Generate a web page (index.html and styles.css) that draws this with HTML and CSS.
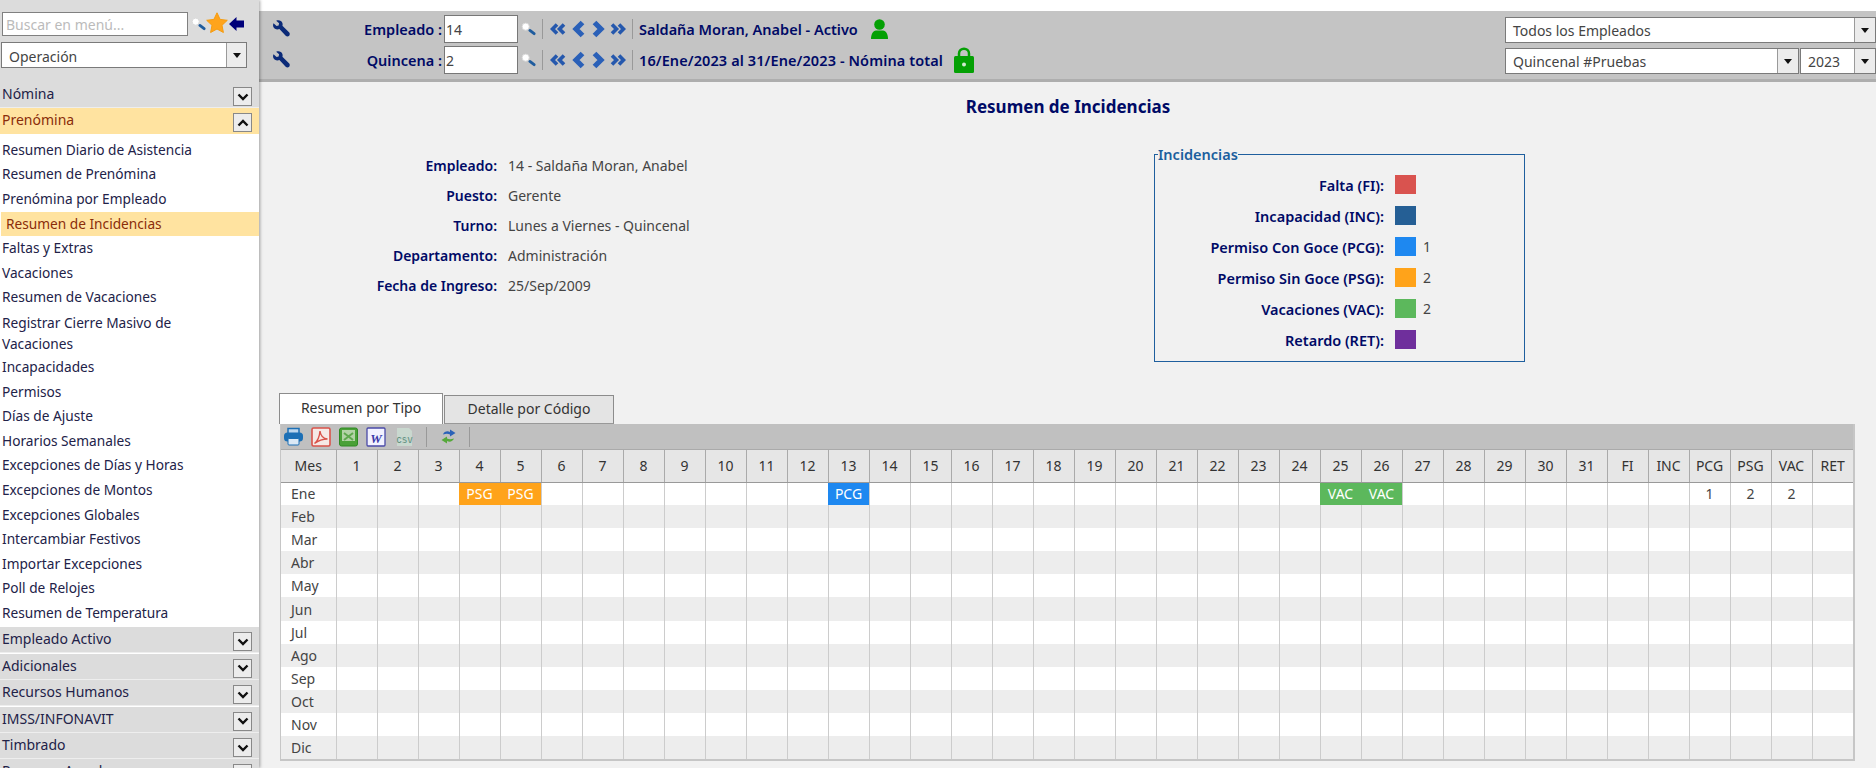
FILE: index.html
```html
<!DOCTYPE html>
<html lang="es">
<head>
<meta charset="utf-8">
<title>Resumen de Incidencias</title>
<link rel="stylesheet" href="styles.css">
</head>
<body>
<svg class="defs" width="0" height="0" aria-hidden="true">
  <symbol id="i-wrench" viewBox="0 0 18 18"><path d="M1.500 3.200 4.600 6 6.600 5.400 7.100 3.300 4.200.8C6.600-.3 9.600.6 10.400 3c.3 1 .3 1.900 0 2.700L17 12.300c1 1 1 2.300.2 3.400-1 1-2.500 1-3.500 0L7.400 9C5 10 2.300 9 1.300 6.700.9 5.600 1 4.300 1.500 3.200Z" fill="#0b2a78"/></symbol>
  <symbol id="i-mag" viewBox="0 0 16 14"><circle cx="5" cy="4.500" r="3.800" fill="#fff" stroke="#d8d8d8"/><path d="M9.500 8.500l4.500 3.500" stroke="#1f5c9e" stroke-width="3" stroke-linecap="round"/></symbol>
  <symbol id="i-dbl-l" viewBox="0 0 16 14"><path d="M7 2.500 2.500 7 7 11.500M14 2.500 9.500 7l4.500 4.500" fill="none" stroke="#2558ad" stroke-width="3.600"/></symbol>
  <symbol id="i-dbl-r" viewBox="0 0 16 14"><path d="M2 2.500 6.500 7 2 11.500M9 2.500 13.500 7 9 11.500" fill="none" stroke="#2558ad" stroke-width="3.600"/></symbol>
  <symbol id="i-l" viewBox="0 0 14 18"><path d="M10.500 2.500 4 9l6.500 6.500" fill="none" stroke="#2a60b8" stroke-width="5.200"/></symbol>
  <symbol id="i-r" viewBox="0 0 14 18"><path d="M3.500 2.500 10 9l-6.500 6.500" fill="none" stroke="#2a60b8" stroke-width="5.200"/></symbol>
  <symbol id="i-down" viewBox="0 0 12 8"><path d="M1.500 1.500 6 6l4.500-4.500" fill="none" stroke="#111" stroke-width="2.400"/></symbol>
  <symbol id="i-up" viewBox="0 0 12 8"><path d="M1.500 6.500 6 2l4.500 4.500" fill="none" stroke="#111" stroke-width="2.400"/></symbol>
</svg>

<aside class="sidebar">
  <div class="side-top">
    <div class="search-row">
      <input class="search" type="text" placeholder="Buscar en menú...">
      <svg class="mag" width="15" height="14"><use href="#i-mag"/></svg>
      <svg class="star" width="22" height="22" viewBox="0 0 22 22"><path d="M11 .8l3.100 6.600 7.200.9-5.300 5 1.400 7.200L11 17l-6.400 3.500L6 13.300.7 8.300l7.200-.9Z" fill="#ffa41c" stroke="#f59c10" stroke-linejoin="round"/></svg>
      <svg class="back" width="15" height="14" viewBox="0 0 15 14"><path d="M0 7 7.500 0v3.500H15v7H7.500V14Z" fill="#00007a"/></svg>
    </div>
    <div class="combo combo-side">
      <span class="combo-text">Operación</span><span class="combo-btn"><i class="caret"></i></span>
    </div>
  </div>
  <div class="head"><span>Nómina</span><span class="tog"><svg width="12" height="8"><use href="#i-down"/></svg></span></div>
  <div class="head open"><span>Prenómina</span><span class="tog"><svg width="12" height="8"><use href="#i-up"/></svg></span></div>
  <ul class="menu">
    <li>Resumen Diario de Asistencia</li>
    <li>Resumen de Prenómina</li>
    <li>Prenómina por Empleado</li>
    <li class="sel">Resumen de Incidencias</li>
    <li>Faltas y Extras</li>
    <li>Vacaciones</li>
    <li>Resumen de Vacaciones</li>
    <li>Registrar Cierre Masivo de Vacaciones</li>
    <li>Incapacidades</li>
    <li>Permisos</li>
    <li>Días de Ajuste</li>
    <li>Horarios Semanales</li>
    <li>Excepciones de Días y Horas</li>
    <li>Excepciones de Montos</li>
    <li>Excepciones Globales</li>
    <li>Intercambiar Festivos</li>
    <li>Importar Excepciones</li>
    <li>Poll de Relojes</li>
    <li>Resumen de Temperatura</li>
  </ul>
  <div class="head"><span>Empleado Activo</span><span class="tog"><svg width="12" height="8"><use href="#i-down"/></svg></span></div>
  <div class="head"><span>Adicionales</span><span class="tog"><svg width="12" height="8"><use href="#i-down"/></svg></span></div>
  <div class="head"><span>Recursos Humanos</span><span class="tog"><svg width="12" height="8"><use href="#i-down"/></svg></span></div>
  <div class="head"><span>IMSS/INFONAVIT</span><span class="tog"><svg width="12" height="8"><use href="#i-down"/></svg></span></div>
  <div class="head"><span>Timbrado</span><span class="tog"><svg width="12" height="8"><use href="#i-down"/></svg></span></div>
  <div class="head"><span>Procesos Anuales</span><span class="tog"><svg width="12" height="8"><use href="#i-down"/></svg></span></div>
</aside>

<main class="main">
  <header class="bar">
    <div class="bar-left">
      <div class="bar-row">
        <svg class="wrench" width="18" height="18"><use href="#i-wrench"/></svg>
        <label class="bar-label">Empleado :</label>
        <input class="num" type="text" value="14">
        <svg class="mag" width="15" height="14"><use href="#i-mag"/></svg>
        <i class="sep"></i>
        <span class="nav">
          <svg width="16" height="14"><use href="#i-dbl-l"/></svg>
          <svg width="14" height="18"><use href="#i-l"/></svg>
          <svg width="14" height="18"><use href="#i-r"/></svg>
          <svg width="16" height="14"><use href="#i-dbl-r"/></svg>
        </span>
        <i class="sep"></i>
        <strong class="bar-text">Saldaña Moran, Anabel - Activo</strong>
        <svg class="status" width="17" height="20" viewBox="0 0 17 20"><circle cx="8.500" cy="5.500" r="5.300" fill="#04a004"/><path d="M0 20c0-5 2-8 5-8.500h7c3 .5 5 3.500 5 8.500Z" fill="#04a004"/></svg>
      </div>
      <div class="bar-row">
        <svg class="wrench" width="18" height="18"><use href="#i-wrench"/></svg>
        <label class="bar-label">Quincena :</label>
        <input class="num" type="text" value="2">
        <svg class="mag" width="15" height="14"><use href="#i-mag"/></svg>
        <i class="sep"></i>
        <span class="nav">
          <svg width="16" height="14"><use href="#i-dbl-l"/></svg>
          <svg width="14" height="18"><use href="#i-l"/></svg>
          <svg width="14" height="18"><use href="#i-r"/></svg>
          <svg width="16" height="14"><use href="#i-dbl-r"/></svg>
        </span>
        <i class="sep"></i>
        <strong class="bar-text wide">16/Ene/2023 al 31/Ene/2023 - Nómina total</strong>
        <svg class="status lock" width="20" height="26" viewBox="0 0 20 26"><path d="M5 11V6.500c0-6.500 10-6.500 10 0V11" fill="none" stroke="#04a004" stroke-width="2.500"/><rect y="9" width="20" height="17" rx="1.500" fill="#04a004"/><circle cx="10" cy="17.500" r="2" fill="#cfe8cf"/></svg>
      </div>
    </div>
    <div class="bar-right">
      <div class="combo combo-full"><span class="combo-text">Todos los Empleados</span><span class="combo-btn"><i class="caret"></i></span></div>
      <div class="combo-pair">
        <div class="combo combo-q"><span class="combo-text">Quincenal #Pruebas</span><span class="combo-btn"><i class="caret"></i></span></div>
        <div class="combo combo-y"><span class="combo-text">2023</span><span class="combo-btn"><i class="caret"></i></span></div>
      </div>
    </div>
  </header>

  <section class="content">
    <h1 class="title">Resumen de Incidencias</h1>
    <div class="summary">
      <dl class="info">
        <dt>Empleado:</dt><dd>14 - Saldaña Moran, Anabel</dd>
        <dt>Puesto:</dt><dd>Gerente</dd>
        <dt>Turno:</dt><dd>Lunes a Viernes - Quincenal</dd>
        <dt>Departamento:</dt><dd>Administración</dd>
        <dt>Fecha de Ingreso:</dt><dd>25/Sep/2009</dd>
      </dl>
      <fieldset class="legendbox">
        <legend>Incidencias</legend>
        <div class="lg-row"><b>Falta (FI):</b><i class="swatch c-fi"></i><span></span></div>
        <div class="lg-row"><b>Incapacidad (INC):</b><i class="swatch c-inc"></i><span></span></div>
        <div class="lg-row"><b>Permiso Con Goce (PCG):</b><i class="swatch c-pcg"></i><span>1</span></div>
        <div class="lg-row"><b>Permiso Sin Goce (PSG):</b><i class="swatch c-psg"></i><span>2</span></div>
        <div class="lg-row"><b>Vacaciones (VAC):</b><i class="swatch c-vac"></i><span>2</span></div>
        <div class="lg-row"><b>Retardo (RET):</b><i class="swatch c-ret"></i><span></span></div>
      </fieldset>
    </div>

    <nav class="tabs">
      <span class="tab active">Resumen por Tipo</span>
      <span class="tab">Detalle por Código</span>
    </nav>
    <div class="grid">
      <div class="grid-tools">
        <svg width="19" height="19" viewBox="0 0 19 19"><path d="M4 7V1.500h11V7" fill="#bcd6ee" stroke="#1c6fb5" stroke-width="1.500"/><rect y="5.500" width="19" height="9" rx="3.500" fill="#1c6fb5"/><rect x="4" y="11.500" width="11" height="6.500" rx="1" fill="#dbe9f5" stroke="#1c6fb5"/></svg>
        <svg width="20" height="20" viewBox="0 0 20 20"><rect x="1" y="1" width="18" height="18" rx="1.500" fill="#f6e9e6" stroke="#d9534a" stroke-width="1.600"/><path d="M3.500 16.500c3-2.500 5-6.500 5.500-12.500.5 4.500 3.500 7.500 7.500 8-4.500 0-9 1.500-13 4.500Z" fill="none" stroke="#d9534a" stroke-width="1.400"/></svg>
        <svg width="19" height="20" viewBox="0 0 19 20"><rect x="0.500" y="1" width="18" height="18" rx="2" fill="#4aa038" stroke="#2e8a22"/><rect x="3" y="3" width="13" height="11" fill="#b3d3a6"/><path d="M5 6l9 7M14 6l-9 7" stroke="#5fa84e" stroke-width="2"/></svg>
        <svg width="20" height="20" viewBox="0 0 20 20"><rect x="1" y="1" width="18" height="18" rx="1" fill="#f2f2ff" stroke="#4a4aa8" stroke-width="1.300"/><text class="ico-w" x="10" y="15.500" text-anchor="middle">W</text></svg>
        <svg width="21" height="20" viewBox="0 0 21 20"><path d="M3 1h12l3 3v15H3Z" fill="#c9d8cf"/><text class="ico-csv" x="10.500" y="15.500" text-anchor="middle">csv</text></svg>
        <i class="tool-sep"></i>
        <svg width="17" height="17" viewBox="0 0 17 17"><path d="M3 6.500C4 3.500 7.500 2.500 10 4V1.500L15.500 5 10 8.500V6.500C8 5.500 6 5.500 3 6.500Z" fill="#2b62b8"/><path d="M14 10.500c-1 3-4.500 4-7 2.500v2.500L1.500 12 7 8.500v2c2 1 4 1 7 0Z" fill="#55a83a"/></svg>
        <i class="tool-sep"></i>
      </div>
      <table class="tbl">
        <thead>
          <tr><th class="mes">Mes</th><th>1</th><th>2</th><th>3</th><th>4</th><th>5</th><th>6</th><th>7</th><th>8</th><th>9</th><th>10</th><th>11</th><th>12</th><th>13</th><th>14</th><th>15</th><th>16</th><th>17</th><th>18</th><th>19</th><th>20</th><th>21</th><th>22</th><th>23</th><th>24</th><th>25</th><th>26</th><th>27</th><th>28</th><th>29</th><th>30</th><th>31</th><th>FI</th><th>INC</th><th>PCG</th><th>PSG</th><th>VAC</th><th>RET</th></tr>
        </thead>
        <tbody>
          <tr><td>Ene</td><td></td><td></td><td></td><td class="c-psg">PSG</td><td class="c-psg">PSG</td><td></td><td></td><td></td><td></td><td></td><td></td><td></td><td class="c-pcg">PCG</td><td></td><td></td><td></td><td></td><td></td><td></td><td></td><td></td><td></td><td></td><td></td><td class="c-vac">VAC</td><td class="c-vac">VAC</td><td></td><td></td><td></td><td></td><td></td><td></td><td></td><td>1</td><td>2</td><td>2</td><td></td></tr>
          <tr><td>Feb</td><td></td><td></td><td></td><td></td><td></td><td></td><td></td><td></td><td></td><td></td><td></td><td></td><td></td><td></td><td></td><td></td><td></td><td></td><td></td><td></td><td></td><td></td><td></td><td></td><td></td><td></td><td></td><td></td><td></td><td></td><td></td><td></td><td></td><td></td><td></td><td></td><td></td></tr>
          <tr><td>Mar</td><td></td><td></td><td></td><td></td><td></td><td></td><td></td><td></td><td></td><td></td><td></td><td></td><td></td><td></td><td></td><td></td><td></td><td></td><td></td><td></td><td></td><td></td><td></td><td></td><td></td><td></td><td></td><td></td><td></td><td></td><td></td><td></td><td></td><td></td><td></td><td></td><td></td></tr>
          <tr><td>Abr</td><td></td><td></td><td></td><td></td><td></td><td></td><td></td><td></td><td></td><td></td><td></td><td></td><td></td><td></td><td></td><td></td><td></td><td></td><td></td><td></td><td></td><td></td><td></td><td></td><td></td><td></td><td></td><td></td><td></td><td></td><td></td><td></td><td></td><td></td><td></td><td></td><td></td></tr>
          <tr><td>May</td><td></td><td></td><td></td><td></td><td></td><td></td><td></td><td></td><td></td><td></td><td></td><td></td><td></td><td></td><td></td><td></td><td></td><td></td><td></td><td></td><td></td><td></td><td></td><td></td><td></td><td></td><td></td><td></td><td></td><td></td><td></td><td></td><td></td><td></td><td></td><td></td><td></td></tr>
          <tr><td>Jun</td><td></td><td></td><td></td><td></td><td></td><td></td><td></td><td></td><td></td><td></td><td></td><td></td><td></td><td></td><td></td><td></td><td></td><td></td><td></td><td></td><td></td><td></td><td></td><td></td><td></td><td></td><td></td><td></td><td></td><td></td><td></td><td></td><td></td><td></td><td></td><td></td><td></td></tr>
          <tr><td>Jul</td><td></td><td></td><td></td><td></td><td></td><td></td><td></td><td></td><td></td><td></td><td></td><td></td><td></td><td></td><td></td><td></td><td></td><td></td><td></td><td></td><td></td><td></td><td></td><td></td><td></td><td></td><td></td><td></td><td></td><td></td><td></td><td></td><td></td><td></td><td></td><td></td><td></td></tr>
          <tr><td>Ago</td><td></td><td></td><td></td><td></td><td></td><td></td><td></td><td></td><td></td><td></td><td></td><td></td><td></td><td></td><td></td><td></td><td></td><td></td><td></td><td></td><td></td><td></td><td></td><td></td><td></td><td></td><td></td><td></td><td></td><td></td><td></td><td></td><td></td><td></td><td></td><td></td><td></td></tr>
          <tr><td>Sep</td><td></td><td></td><td></td><td></td><td></td><td></td><td></td><td></td><td></td><td></td><td></td><td></td><td></td><td></td><td></td><td></td><td></td><td></td><td></td><td></td><td></td><td></td><td></td><td></td><td></td><td></td><td></td><td></td><td></td><td></td><td></td><td></td><td></td><td></td><td></td><td></td><td></td></tr>
          <tr><td>Oct</td><td></td><td></td><td></td><td></td><td></td><td></td><td></td><td></td><td></td><td></td><td></td><td></td><td></td><td></td><td></td><td></td><td></td><td></td><td></td><td></td><td></td><td></td><td></td><td></td><td></td><td></td><td></td><td></td><td></td><td></td><td></td><td></td><td></td><td></td><td></td><td></td><td></td></tr>
          <tr><td>Nov</td><td></td><td></td><td></td><td></td><td></td><td></td><td></td><td></td><td></td><td></td><td></td><td></td><td></td><td></td><td></td><td></td><td></td><td></td><td></td><td></td><td></td><td></td><td></td><td></td><td></td><td></td><td></td><td></td><td></td><td></td><td></td><td></td><td></td><td></td><td></td><td></td><td></td></tr>
          <tr><td>Dic</td><td></td><td></td><td></td><td></td><td></td><td></td><td></td><td></td><td></td><td></td><td></td><td></td><td></td><td></td><td></td><td></td><td></td><td></td><td></td><td></td><td></td><td></td><td></td><td></td><td></td><td></td><td></td><td></td><td></td><td></td><td></td><td></td><td></td><td></td><td></td><td></td><td></td></tr>
        </tbody>
      </table>
    </div>
  </section>
</main>
</body>
</html>
```

FILE: styles.css
```css
* { box-sizing: border-box; }
html, body { height: 100%; }
body {
  margin: 0;
  height: 768px;
  overflow: hidden;
  display: flex;
  background: #f1f1f1;
  font-family: "Noto Sans", "Open Sans", sans-serif;
  font-size: 14px;
  color: #444;
}
.defs { position: absolute; }

/* Sidebar */
.sidebar {
  flex: 0 0 259px;
  width: 259px;
  height: 768px;
  overflow: hidden;
  background: #fff;
  box-shadow: 1px 0 3px rgba(0,0,0,.35);
  position: relative;
  z-index: 2;
}
.side-top { background: #dcdcdc; height: 82px; padding: 12px 0 0 1px; }
.search-row { display: flex; align-items: center; height: 24px; padding-left: 1px; }
.search {
  width: 186px; height: 24px; padding: 0 3px; margin: 0;
  border: 1px solid #808080; background: #fff;
  font: 14px "Noto Sans", sans-serif; color: #333; outline: 0;
}
.search::placeholder { color: #bbb; opacity: 1; }
.search-row .mag { margin-left: 3px; }
.search-row .star { margin-left: 0; margin-top: -2px; }
.search-row .back { margin-left: 1px; }

.combo {
  display: flex; height: 26px;
  background: #fff; border: 1px solid #7a7a7a;
  color: #444;
}
.combo-text { flex: 1; padding-left: 7px; line-height: 25px; white-space: nowrap; overflow: hidden; }
.combo-btn {
  flex: 0 0 20px; background: #ececec; border-left: 1px solid #9a9a9a;
  display: flex; align-items: center; justify-content: center;
}
.caret { width: 0; height: 0; border: 4.5px solid transparent; border-top: 5px solid #111; border-bottom: 0; }
.combo-side { width: 246px; margin-top: 6px; }
.combo-side .combo-text { line-height: 27px; }

.head {
  display: flex; justify-content: space-between;
  height: 26px; margin-bottom: 0.4px; padding: 0 7px 0 2px;
  background: #dcdcdc; color: #222248; line-height: 24px;
  border-bottom: 1px solid #eee;
}
.head.open { background: #ffe3a0; color: #8a2d0a; border-bottom: 0; }
.tog {
  flex: 0 0 19px; width: 19px; height: 19px; margin-top: 5px;
  border: 1px solid #888; background: #ececec;
  display: flex; align-items: center; justify-content: center;
}
.menu { list-style: none; margin: 0; padding: 3px 0 2px; background: #fff; font-size: 13.700px; }
.menu li {
  padding: 0 2px; line-height: 20.700px; min-height: 24.600px; padding-top: 2px; color: #222248;
}
.menu li:nth-child(8) { line-height: 21px; padding-bottom: 1px; width: 240px; }
.menu li.sel { background: #ffe3a0; color: #8a2d0a; padding-left: 5px; margin-left: 1px; }

/* Main */
.main { flex: 1; min-width: 0; padding-top: 11px; background: linear-gradient(#fff 11px, #f1f1f1 11px); }
.bar {
  height: 71px; background: #c4c4c4; border-bottom: 3px solid #aeaeae;
  display: flex; justify-content: space-between; padding: 4px 0 0 13px;
}
.bar-row { display: flex; align-items: center; height: 28px; margin-bottom: 3px; }
.wrench { flex: none; }
.bar-label { flex: 0 0 154px; width: 154px; text-align: right; padding-right: 2px; font-size: 14.500px; font-weight: 600; color: #000a66; }
.num {
  width: 74px; height: 28px; margin: 0; padding: 0 1px;
  border: 1px solid #777; background: #fff;
  font: 14px "Noto Sans", sans-serif; color: #444; outline: 0;
}
.bar-row .mag { margin: 0 0 0 3px; }
.sep { width: 1px; height: 20px; background: #999; margin: 0 7px 0 6px; }
.nav { display: flex; align-items: center; gap: 5px; }
.nav svg:first-child { margin-right: 1px; }
.bar-text { font-size: 14.500px; font-weight: 600; color: #000a66; white-space: nowrap; margin-left: -1px; }
.bar-text.wide { letter-spacing: .1px; }
.status { margin-left: 13px; }
.status.lock { margin-left: 11px; }
.bar-right { width: 371px; padding-top: 2px; }
.combo-full { height: 26px; width: 371px; margin-bottom: 5px; }
.combo-pair { display: flex; gap: 1px; }
.combo-q { flex: 0 0 294px; }
.combo-y { flex: 0 0 76px; }
.combo-y .combo-btn, .combo-q .combo-btn, .combo-full .combo-btn { flex-basis: 21px; }

/* Content */
.content { padding: 0 20px 0 21px; }
.title { margin: 0; padding-top: 14px; height: 56px; font-size: 17px; font-weight: 700; line-height: 22px; text-align: center; color: #000a66; }
.summary { display: flex; height: 255px; position: relative; margin-left: -1px; }
.info {
  margin: 13px 0 0; display: grid; grid-template-columns: 218px auto;
  grid-auto-rows: 30px; column-gap: 11px; align-content: start; width: 875px;
}
.info dt { text-align: right; font-weight: 600; color: #000a66; line-height: 30px; }
.info dd { margin: 0; line-height: 30px; }
.legendbox {
  width: 371px; height: 215px; margin: 9px 0 0 0; padding: 8px 0 0;
  border: 1px solid #1f5f9e; min-width: 0;
}
.legendbox legend {
  padding: 0; margin-left: 3px; font-size: 14.500px; font-weight: 600; color: #1a5f9e; line-height: 14px;
}
.lg-row { display: grid; grid-template-columns: 229px 21px auto; column-gap: 11px; align-items: center; height: 31px; }
.lg-row b { text-align: right; font-size: 14.500px; font-weight: 600; color: #000a66; }
.lg-row span { margin-left: -4px; }
.swatch { width: 21px; height: 19px; display: block; }
.c-fi { background: #d9534f; }
.c-inc { background: #255f95; }
.c-pcg { background: #1e88f0; }
.c-psg { background: #ffa31a; }
.c-vac { background: #5cb85c; }
.c-ret { background: #6f2f9c; }

.tabs { display: flex; height: 31px; align-items: flex-end; margin-left: -1px; }
.tab {
  width: 170px; height: 29px; text-align: center; line-height: 25px;
  background: #e4e4e4; border: 1px solid #8c8c8c; border-bottom: 1px solid #999;
  color: #333; margin-left: 1px;
}
.tab.active { width: 164px; height: 31px; background: #fff; line-height: 28px; border-bottom: 0; margin-left: 0; }

.grid { width: 1575px; border: 2px solid #c6c6c6; border-top: 0; border-left-width: 1px; background: #fff; }
.grid-tools {
  height: 26px; background: #c0c0c0; display: flex; align-items: center;
  padding-left: 3px; gap: 8px; border-bottom: 1px solid #aaa;
}
.ico-w { font: italic 700 13px "Liberation Serif", serif; fill: #3a3aa8; }
.ico-csv { font: 700 10px "Liberation Sans", sans-serif; fill: #5f8f7e; stroke: #eef4f0; stroke-width: .2px; }
.tool-sep { width: 1px; height: 20px; background: #999; margin: 0 5px 0 3px; }
.tool-sep:last-child { margin-left: 4px; }
.tbl { border-collapse: collapse; table-layout: fixed; width: 1572px; color: #444; }
.tbl th, .tbl td { border-left: 1px solid #ccc; padding: 0; text-align: center; font-weight: 400; }
.tbl th { height: 32px; background: #e6e6e6; border-left-color: #aaa; border-bottom: 1px solid #999; color: #333; }
.tbl th.mes { width: 55px; border-left: 0; }
.tbl td { height: 23.100px; line-height: 19px; }
.tbl td:first-child { text-align: left; padding-left: 10px; border-left: 0; }
.tbl tbody tr:nth-child(even) td { background: #ededed; }
.tbl td.c-psg { background: #ffa31a; color: #fff; border-left-color: #ffa31a; }
.tbl td.c-pcg { background: #1e88f0; color: #fff; border-left-color: #1e88f0; }
.tbl td.c-vac { background: #5cb85c; color: #fff; border-left-color: #5cb85c; }
```
